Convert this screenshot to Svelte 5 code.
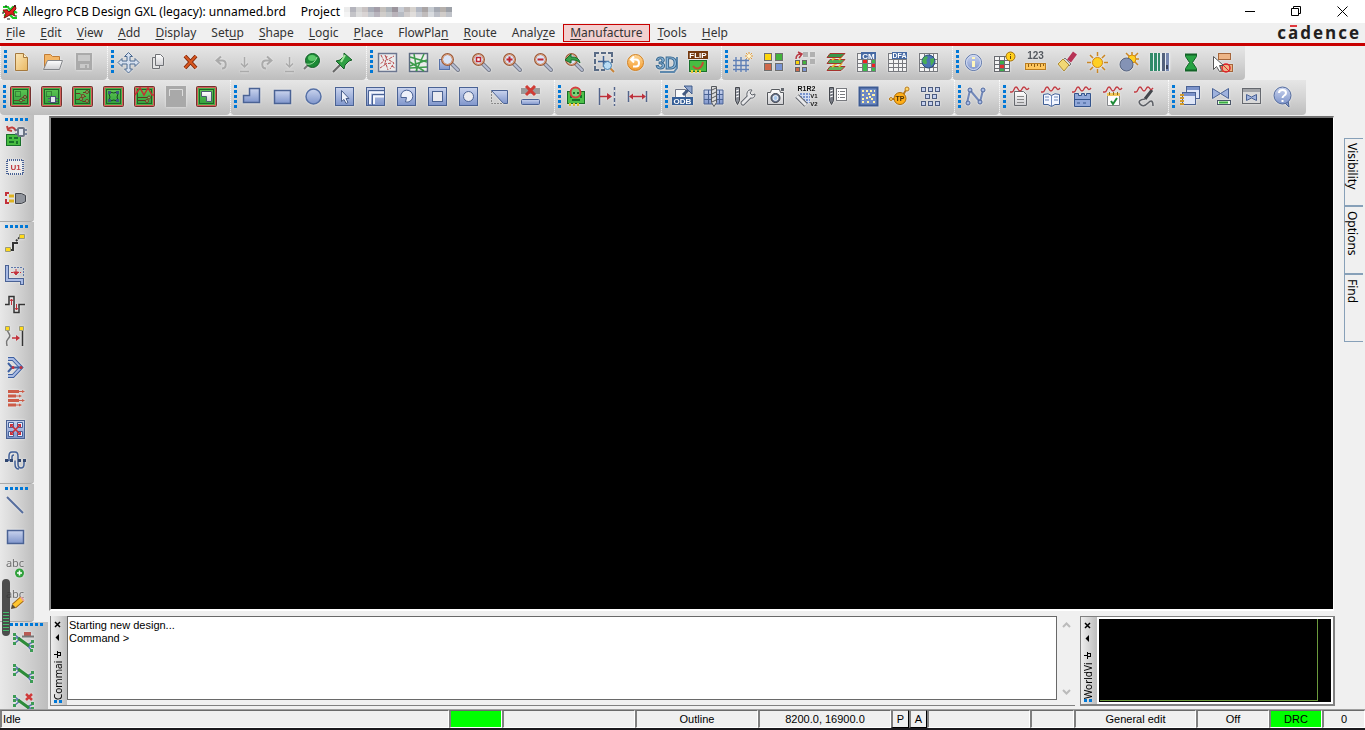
<script lang="ts">
	type Tool = { icon: string; label: string; small?: boolean };

	const menus = [
		['', 'F', 'ile'],
		['', 'E', 'dit'],
		['', 'V', 'iew'],
		['', 'A', 'dd'],
		['', 'D', 'isplay'],
		['Set', 'u', 'p'],
		['', 'S', 'hape'],
		['', 'L', 'ogic'],
		['', 'P', 'lace'],
		['FlowPla', 'n', ''],
		['', 'R', 'oute'],
		['Analy', 'z', 'e'],
		['', 'M', 'anufacture'],
		['', 'T', 'ools'],
		['', 'H', 'elp']
	];

	let activeMenu = $state('Manufacture');

	// shared pieces of the icons, all on a 23 x 23 grid
	const board = (inner: string) =>
		`<rect x="1.5" y="1.5" width="20" height="20" rx="1" fill="#4bb04a" stroke="#74302f"/>
		<rect x="2.5" y="2.5" width="18" height="18" fill="none" stroke="#d4605a"/>
		<rect x="4.5" y="4.5" width="14" height="14" fill="url(#leaf)" stroke="#1d6426"/>${inner}`;
	const panel = (inner: string) =>
		`<rect x="2.5" y="2.5" width="18" height="18" fill="url(#steel)" stroke="#4a6294"/>${inner}`;
	const lens = (inner: string) =>
		`<path d="M14 13l6 6" stroke="#7a7f8c" stroke-width="4" stroke-linecap="round"/>
		<path d="M14 13l6 6" stroke="#b6bdd2" stroke-width="2" stroke-linecap="round"/>
		<circle cx="9.5" cy="8.5" r="5.5" fill="#dbe4f6" stroke="#9a5a3c" stroke-width="2"/>
		<circle cx="9.5" cy="8.5" r="5" fill="none" stroke="#e0a37c"/>${inner}`;
	const wave = (inner: string) =>
		`${inner}<path d="M1 7h2c2 0 2-5 4-5s2 4 4 4 2-4 4-4 2 5 5 1" fill="none" stroke="#c23b42" stroke-width="1.4"/>`;
	const sheet = (head: string) =>
		`<rect x="2.5" y="2.5" width="18" height="18" fill="#f4f4f4" stroke="#77797e"/>
		<path d="M3 8.500h17M3 12.500h17M3 16.500h17M7.500 3v17M12.500 3v17M16.500 3v17" stroke="#77797e"/>${head}`;
	const label = (x: number, y: number, size: number, fill: string, text: string) =>
		`<text x="${x}" y="${y}" font-size="${size}" font-weight="700" font-family="Liberation Sans, sans-serif" text-anchor="middle" fill="${fill}">${text}</text>`;
	const blocks = (list: number[][], size: number, fill: string, stroke: string) =>
		list
			.map(([x, y]) => `<rect x="${x + 0.5}" y="${y + 0.5}" width="${size}" height="${size}" fill="${fill}" stroke="${stroke}"/>`)
			.join('');
	const ratsnest = (inner: string) =>
		`<path d="M2 4l6 5M2 8h6M3 13l5-4M8 9l7 6M15 15l6-3M15 15l6 2M15 15l5 6" stroke="#5b76b0" stroke-width="1.500" fill="none"/>
		<path d="M6 8l11 8" stroke="#2d8b3a" stroke-width="3"/>
		<path d="M1 3h3v3H1zM1 7h3v3H1zM1 12h3v3H1zM19 10h3v3h-3zM19 15h3v3h-3zM18 19h3v3h-3z" fill="#3c9b55"/>${inner}`;

	const icons: Record<string, string> = {
		new: `<path d="M5.500 2.500h8l4 4v13h-12z" fill="url(#paper)" stroke="#a5793d"/><path d="M13.500 2.500v4h4" fill="#fff3d2" stroke="#a5793d"/>`,
		open: `<path d="M3.500 17.500v-14h6l2 2h7v4" fill="#f3b667" stroke="#c27c34"/><path d="M2.500 18.500l4-9h15l-3 9z" fill="url(#page)" stroke="#84868a"/>`,
		save: `<path d="M4 2h16v17H4z" fill="#aaa"/><path d="M6 4h12v6H6zM8 13h9v4H8z" fill="#c9c9c9"/><path d="M13 14h2v3h-2z" fill="#aaa"/>`,
		move: `<path d="M11.500 1.500l4 4h-2.500v4.500h5v-2.500l4 4-4 4v-2.500h-5v5h2.500l-4 4-4-4h2.500v-5h-5v2.500l-4-4 4-4v2.500h5v-4.500h-2.500z" fill="#d5dfee" stroke="#4b688e"/>`,
		copy: `<path d="M4.500 6.500h7v11h-7z" fill="#e5e5e5" stroke="#6f7175"/><path d="M7.500 3.500h5l3 3v8h-8z" fill="url(#page)" stroke="#6f7175"/>`,
		delete: `<path d="M6 5l11 12M17 5L6 17" stroke="#7d2c12" stroke-width="4"/><path d="M6 5l11 12M17 5L6 17" stroke="#d9571f" stroke-width="2"/>`,
		undo: `<path d="M7 9.500h5c5 0 5 8 0 8M11 5.500l-4.500 4 4.500 4" fill="none" stroke="#aaa" stroke-width="2"/>`,
		redo: `<path d="M16 9.500h-5c-5 0-5 8 0 8M12 5.500l4.500 4-4.500 4" fill="none" stroke="#aaa" stroke-width="2"/>`,
		more: `<path d="M11.500 6v10M8 12.500l3.500 3.500 3.500-3.500M7 20.500h9" fill="none" stroke="#aaa" stroke-width="1.500"/>`,
		leafpin: `<path d="M4 18l4-4" stroke="#777" stroke-width="2"/><ellipse cx="12.500" cy="9.500" rx="7" ry="7" fill="#1c8a36" stroke="#135c26"/><ellipse cx="12" cy="7" rx="4" ry="3" fill="#5cc96a"/><path d="M6 13c5 1 9-1 11-7" fill="none" stroke="#a5dba4"/>`,
		pushpin: `<path d="M2 21l8-8" stroke="#666" stroke-width="2"/><path d="M13 2l8 7-3 1-4 4-1 4-8-8 4-1 4-4z" fill="#2fa043" stroke="#135c26"/><path d="M14 4l-4 7" stroke="#a5e6a0" stroke-width="2"/>`,
		nets: `<rect x="2.500" y="2.500" width="18" height="18" fill="#ececec" stroke="#6b7690" stroke-width="1.500"/><path d="M5 4l3 6-4 3M9 4l2 5 7-4M4 17l6-4 2 6M13 9l5 3-4 6M8 13l8-1M11 5l-2 7M16 15l3 2" fill="none" stroke="#b9484b" stroke-dasharray="3 1"/>`,
		netsgreen: `<rect x="2.500" y="2.500" width="18" height="18" fill="#ececec" stroke="#5b6a80" stroke-width="1.500"/><path d="M3 6l17 5M3 15l17-6M7 3l3 17M17 3l-8 17M3 11l14 9M3 17l17-1" fill="none" stroke="#3d9b4b" stroke-width="1.500"/>`,
		zoomarea: `<rect x="1.500" y="8.500" width="10" height="10" fill="url(#steel)" stroke="#5570a8"/>` + lens(''),
		zoomrect: lens(`<rect x="7.500" y="6.500" width="4" height="4" fill="#fff" stroke="#bf2430" stroke-width="1.500"/>`),
		zoomin: lens(`<path d="M6.500 8.500h6M9.500 5.500v6" stroke="#bf2430" stroke-width="2"/>`),
		zoomout: lens(`<path d="M6.500 8.500h6" stroke="#bf2430" stroke-width="2"/>`),
		zoomprev: lens(`<path d="M3 9l6-6v3c5 0 8 1 9 6-3-3-5-3-9-3v3z" fill="#38a34b" stroke="#176a2a"/>`),
		zoomsel: `<path d="M2 6V2h4M8 2h5M15 2h4v4M2 8v5M2 15v4h4M19 8v4M8 19h4" fill="none" stroke="#596b85" stroke-width="2"/><path d="M10.500 5v11M5 10.500h11" stroke="#3d5f90" stroke-width="1.500"/><path d="M17 17l4 4" stroke="#c98438" stroke-width="2"/><circle cx="14.500" cy="14.500" r="4" fill="#b9dcf5" stroke="#477fae"/>`,
		refresh: `<circle cx="11.500" cy="11.500" r="8" fill="url(#amber)" stroke="#cf8126"/><path d="M7 8.500h5c4 0 4 7 0 7H9M10 5.500l-3 3 3 3" fill="none" stroke="#fff" stroke-width="2"/>`,
		threed: `<path d="M5 21h14l3-4V6" fill="none" stroke="#5d88ad" stroke-width="2"/><text x="11.500" y="17.500" text-anchor="middle" font-family="Liberation Sans, sans-serif" font-weight="700" font-size="17" fill="#8db8dc" stroke="#3a698f">3D</text>`,
		flip: `<rect x="3.500" y="9.500" width="17" height="11" fill="#48bd42" stroke="#18702a"/><path d="M5 19h2v3H5zM9 19h2v3H9zM13 19h2v3h-2z" fill="#e8c93c"/><path d="M7 15c4 5 9 2 10-4" fill="none" stroke="#c84a33" stroke-width="2"/><rect x="2" y="0" width="20" height="8" fill="#74380e"/>` + label(12, 7, 8, '#fff', 'FLIP'),
		grid: `<path d="M5 6v15M10 6v15M15 8v13M2 9.500h16M2 14.500h16M2 18.500h16" stroke="#5f7fb5" stroke-width="1.400"/><path d="M18 1v8M14 5h8M15 2l6 6M21 2l-6 6" stroke="#e19a35"/><circle cx="18" cy="5" r="2" fill="#fff5cf"/>`,
		colors: `<rect x="2.500" y="2.500" width="7" height="7" fill="#fcd50b" stroke="#6e6e6e"/><rect x="13.500" y="2.500" width="7" height="7" fill="#43b33c" stroke="#6e6e6e"/><rect x="2.500" y="12.500" width="7" height="7" fill="#cf684a" stroke="#6e6e6e"/><rect x="13.500" y="12.500" width="7" height="7" fill="#7994d3" stroke="#6e6e6e"/>`,
		shadow: `<path d="M10 1h5v5h-5zM17 1h5v5h-5zM17 8h5v5h-5z" fill="#b1b1b1"/><path d="M3 8c0-4 2-5 5-5M5 1l4 2-3 4" fill="none" stroke="#b73842" stroke-width="1.500"/><rect x="2.500" y="9.500" width="4" height="4" fill="#fcd50b" stroke="#666"/><rect x="9.500" y="9.500" width="4" height="4" fill="#43b33c" stroke="#666"/><rect x="2.500" y="16.500" width="4" height="4" fill="#cf684a" stroke="#666"/><rect x="9.500" y="16.500" width="4" height="4" fill="#7994d3" stroke="#666"/>`,
		layers: `<path d="M6 15.500h15l-4 4H3z" fill="#5fb45a" stroke="#a5332d"/><path d="M8 16l5-4M15 16l3-4" stroke="#e8b93c" stroke-width="2"/><path d="M6 8.500h15l-4 4H3z" fill="#4cae58" stroke="#a5332d"/><path d="M8 9l5-4M15 9l3-4" stroke="#e8b93c" stroke-width="2"/><path d="M6 2.500h15l-4 4H3z" fill="#38964a" stroke="#a5332d"/>`,
		cm: sheet(`<path d="M8 9h4v3H8zM17 13h3v3h-3z" fill="#e22"/><path d="M8 13h4v7H8zM17 9h3v3h-3zM17 17h3v3h-3z" fill="#3bbb4b"/><path d="M6 1h15v7H6z" fill="#4569a3"/>` + label(13.5, 7.5, 8, '#fff', 'CM')),
		dfa: sheet(`<path d="M6 1h15v7H6z" fill="#4569a3"/>` + label(13.5, 7, 7, '#fff', 'DFA')),
		globe: sheet(`<circle cx="11.500" cy="10.500" r="6.500" fill="#4b73b4" stroke="#284c7c"/><path d="M7 6c3-2 5 0 3 2s2 4-1 5-3-2-4-3zM13 8l4-1v4l-3 4z" fill="#48ae55"/>`),
		info: `<circle cx="11.500" cy="11.500" r="8" fill="url(#steel)" stroke="#5b74a8"/><circle cx="11.500" cy="11.500" r="7" fill="none" stroke="#d6def3"/><path d="M10 10h3v6h-3zM10 6h3v2h-3z" fill="#fff6bd"/>`,
		report: `<rect x="1.500" y="5.500" width="15" height="15" fill="#f4f4f4" stroke="#696b70"/><path d="M2 9.500h14M2 13.500h14M2 17.500h14M6.500 6v14M11.500 6v14" stroke="#696b70"/><path d="M7 10h4v3H7zM7 18h4v2H7z" fill="#3cae4c"/><path d="M7 14h4v3H7z" fill="#e23030"/><circle cx="17.500" cy="5.500" r="4.500" fill="#ffcf1b" stroke="#a06d0c"/><path d="M17.500 5v3M17.500 3v1" stroke="#6b4a0a"/>`,
		ruler: label(11.5, 8, 10, '#55595f', '123') + `<rect x="1.500" y="12.500" width="20" height="6" fill="#ffc75e" stroke="#ba7d20"/><path d="M4.500 13v3M7.500 13v2M10.500 13v3M13.500 13v2M16.500 13v3M19.500 13v2" stroke="#8f5e15"/>`,
		brush: `<path d="M20 2l-6 8" stroke="#b73356" stroke-width="5"/><path d="M10 7l6 6-2 2-6-6z" fill="#d7d7d7" stroke="#777"/><path d="M8 8l6 6-5 6-6-7z" fill="#f1d774" stroke="#ae8a31"/>`,
		sun: `<path d="M11.500 1v21M1 11.500h21M4 4l15 15M19 4L4 19" stroke="#c98626" stroke-width="1.500"/><circle cx="11.500" cy="11.500" r="6.500" fill="#dedede"/><circle cx="11.500" cy="11.500" r="5" fill="#ffd022" stroke="#d48a12"/>`,
		dim: `<path d="M15 1v16M7 8h15M9 2l12 12M21 2l-6 6" stroke="#c98626" stroke-width="1.500"/><circle cx="15" cy="8" r="4" fill="#ffd022" stroke="#d48a12"/><circle cx="9.500" cy="13.500" r="6.500" fill="#8493b5" stroke="#55637f"/>`,
		stripes: `<path d="M2 2h20v18H2z" fill="#e6edf2"/><path d="M2 2h3v18H2zM6 2h3v18H6zM10 2h2v18h-2z" fill="#318b69"/><path d="M14 2h3v18h-3z" fill="#52617d"/><path d="M18 2h3v18h-3z" fill="#7687b0"/><path d="M18 14h2v4h-2z" fill="#37425a"/>`,
		hourglass: `<path d="M6.500 3.500h11v2l-4 6 4 6v2h-11v-2l4-6-4-6z" fill="#27a243" stroke="#126327"/><path d="M6 3.500h12M6 19.500h12" stroke="#126327" stroke-width="2"/>`,
		nopick: `<rect x="8.500" y="2.500" width="12" height="6" fill="#edb486" stroke="#a5653a"/><rect x="10.500" y="13.500" width="12" height="7" fill="#edb486" stroke="#a5653a"/><circle cx="16" cy="17" r="4" fill="none" stroke="#e0202a" stroke-width="1.500"/><path d="M13 14l6 6" stroke="#e0202a"/><path d="M3.500 5.500v13l3-3 3 5 2-1-2-5h4z" fill="#fff" stroke="#555"/>`,

		place1: board(`<rect x="6.500" y="6.500" width="5" height="5" fill="none" stroke="#1c5224" stroke-dasharray="1 1"/><path d="M5 15.500h5l3-3h5M13 15.500h3" fill="none" stroke="#6a4a28"/><circle cx="16" cy="12" r="1.500" fill="#6fc065" stroke="#6a3528"/><circle cx="12" cy="15.500" r="1.500" fill="#6fc065" stroke="#6a3528"/>`),
		place2: board(`<rect x="6.500" y="6.500" width="5" height="5" fill="none" stroke="#1c5224" stroke-dasharray="1 1"/><rect x="10.500" y="11.500" width="5" height="6" fill="#e7e7f0" stroke="#4c5478"/><path d="M8 13.500h2M8 16.500h2M16 13.500h2M16 16.500h2" stroke="#4c5478"/>`),
		place3: board(`<path d="M5 8.500h4l3 3h3M5 14.500h4l3 2h3M12 7.500h3" fill="none" stroke="#6a3a24"/><circle cx="12" cy="11" r="1.500" fill="#6fc065" stroke="#7c3b26"/><circle cx="16" cy="7" r="1.500" fill="#6fc065" stroke="#7c3b26"/><circle cx="10" cy="14" r="1.500" fill="#6fc065" stroke="#7c3b26"/><circle cx="16" cy="16" r="1.500" fill="#6fc065" stroke="#7c3b26"/>`),
		place4: board(`<path d="M8 7q4 2 7 0M8 16q4-2 7 0M7 9q2 3 0 6M16 9q-2 3 0 6" fill="none" stroke="#17491f"/><path d="M6 6h3v3H6zM14 6h3v3h-3zM6 14h3v3H6zM14 14h3v3h-3z" fill="#3f5a7c"/>`),
		place5: board(`<path d="M2 10l5-7 4 7 4-7 4 7h2" fill="none" stroke="#c62e33" stroke-width="1.500"/><path d="M5 12.500h10M5 15.500h8" stroke="#5f3a22"/><circle cx="16" cy="12.500" r="1.500" fill="#6fc065" stroke="#7c3b26"/><circle cx="14" cy="16" r="1.500" fill="#6fc065" stroke="#7c3b26"/>`),
		placeoff: `<path d="M2 1h20v21H2z" fill="#a9a9a9"/><path d="M5.500 11V4.500h13V11" fill="none" stroke="#ddd"/>`,
		place7: board(`<path d="M6.500 6.500h10v10h-5v-5h-5z" fill="url(#page)" stroke="#4b5c70"/>`),

		polygon: `<path d="M3.500 10.500h6v-7h10v14h-16z" fill="url(#steel)" stroke="#4a6294" stroke-width="1.500"/>`,
		rect: `<rect x="3.500" y="5.500" width="16" height="13" fill="url(#steel)" stroke="#4a6294" stroke-width="1.500"/>`,
		circle: `<circle cx="11.500" cy="11.500" r="7.500" fill="url(#steel)" stroke="#5670a5" stroke-width="1.500"/>`,
		pick: panel(`<path d="M8.500 5.500v11l2.500-2 2 4 2-1-2-4h3z" fill="#eef1fa" stroke="#4a5f8c"/>`),
		edge: panel(`<path d="M6 19V7.500h14M10 19v-7.500h10" fill="none" stroke="#f4f6fc" stroke-width="2"/><path d="M4.500 20V5.500h16M8.500 20V9.500h12" fill="none" stroke="#4a6294"/>`),
		pie: panel(`<path d="M11.500 12.500H6A6 6 0 1 1 10.500 17z" fill="#eef1fa" stroke="#4a6294"/>`),
		voidrect: panel(`<rect x="6.500" y="6.500" width="10" height="10" fill="#eaeaef" stroke="#4a6294"/>`),
		voidcircle: panel(`<circle cx="11.500" cy="11.500" r="5" fill="#eaeaef" stroke="#4a6294"/>`),
		cut: `<path d="M3.500 5.500h16v13h-4z" fill="url(#steel)" stroke="#4a6294"/><path d="M3.500 6v12.500h12" fill="none" stroke="#888" stroke-dasharray="2 1"/>`,
		dropshape: `<path d="M2 3h19v6H2z" fill="#9b9b9b"/><path d="M7 1l9 9M16 1l-9 9" stroke="#d03c35" stroke-width="3"/><rect x="2.500" y="14.500" width="18" height="5" rx="1" fill="url(#steel)" stroke="#4a6294"/>`,

		package: `<rect x="3.500" y="6.500" width="17" height="12" fill="#4cc149" stroke="#176d25"/><path d="M5 18h2v3H5zM9 18h2v3H9zM13 18h2v3h-2z" fill="#dcc034"/><path d="M6 10h2v3H6zM16 10h2v3h-2zM8 14h8v2H8z" fill="#17732a"/><circle cx="11.500" cy="7.500" r="5" fill="#7dd077" stroke="#d53f3f" stroke-width="2"/><path d="M9 7h2v2H9zM13 7h2v2h-2z" fill="#17732a"/>`,
		dimedge: `<path d="M4.500 3v17M19.500 2v19" stroke="#53648a" stroke-width="1.500"/><path d="M19.500 5v2M19.500 11v2M19.500 17v2" stroke="#e0e0e0" stroke-width="2"/><path d="M5 11.500h9" stroke="#bd303b" stroke-width="1.500"/><path d="M12 8l5 3.500-5 3.500z" fill="#bd303b"/>`,
		dimension: `<path d="M2.500 6v11M20.500 6v11" stroke="#53648a" stroke-width="1.500"/><path d="M5 11.500h13" stroke="#bd303b" stroke-width="1.500"/><path d="M3 11.500l4-3v6zM20 11.500l-4-3v6z" fill="#bd303b"/>`,

		odb: `<path d="M4.500 4.500h10v14h-10z" fill="#fafafa" stroke="#727786"/><path d="M12 10l6-6" stroke="#445b82" stroke-width="3"/><path d="M13 1h8v8z" fill="#8ea4cc" stroke="#3f5a89"/><path d="M1 12h21v8H1z" fill="#365f98"/>` + label(11.5, 19, 8, '#fff', 'ODB'),
		drill: `<path d="M2 5h19v14H2z" fill="url(#steel)" stroke="#4a6294"/><path d="M2 9.500h19M2 14.500h19M6.500 5v14M17.500 5v14" stroke="#4a6294"/><path d="M9.500 1.500h5v16l-2.500 4-2.500-4z" fill="#ddd" stroke="#55585d"/><path d="M10 5l4-2M10 9l4-2M10 13l4-2M10 17l4-2" stroke="#55585d"/>`,
		drillset: `<path d="M2.500 2.500h4v13l-2 4-2-4z" fill="#8b8f98" stroke="#44474d"/><path d="M3 6l3-1M3 9l3-1M3 12l3-1" stroke="#fff"/><path d="M10 18l6-6" stroke="#60646b" stroke-width="5" stroke-linecap="round"/><path d="M14 8q1-4 5-3l-2 3 2 2 3-1q0 5-5 4-4-1-3-5z" fill="#e8e8ea" stroke="#60646b"/><path d="M10 18l6-6" stroke="#e8e8ea" stroke-width="3" stroke-linecap="round"/>`,
		camera: `<path d="M3.500 7.500h3l1-3h8l1 3h3v12h-16z" fill="url(#page)" stroke="#55585d"/><circle cx="11.500" cy="13" r="4.500" fill="#6c7b98" stroke="#3b3e44"/><circle cx="11.500" cy="13" r="2.500" fill="#a8c7ea" stroke="#f5f5f5"/><path d="M17 3h3v3h-3z" fill="#62666d"/>`,
		rename: `<path d="M5 8h10v10H5z" fill="#7994cc"/><path d="M5 10.500h10M5 13.500h10M5 16.500h10M7.500 8v10M10.500 8v10M13.500 8v10" stroke="#d5def2"/><path d="M2 11l4 4 5 5" fill="none" stroke="#60646b" stroke-width="5"/><path d="M2 11l4 4 5 5" stroke="#e8e8ea" stroke-width="3" fill="none"/>` + label(11.5, 6, 7, '#111', 'R1R2') + label(19, 13, 6, '#111', 'V1') + label(19, 21, 6, '#111', 'V2'),
		drilllist: `<path d="M3.500 2.500h4v13l-2 4-2-4z" fill="#777b84" stroke="#44474d"/><path d="M4 6l3-1M4 9l3-1M4 12l3-1" stroke="#fff"/><rect x="10.500" y="3.500" width="10" height="12" fill="#fff" stroke="#77797e"/><path d="M12 6.500h1M14 6.500h5M12 9.500h1M14 9.500h5M12 12.500h1M14 12.500h5" stroke="#77797e"/>`,
		matrix: `<rect x="2.500" y="2.500" width="18" height="18" fill="#6e8ac4" stroke="#3d5b93" stroke-width="2"/><path d="M5 6h2M9 6h2M13 6h2M17 6h1M5 10h2M11 9h2M15 10h3M5 14h2M9 13h2M14 14h2M5 17h2M10 17h2M16 17h2M12 12h2" stroke="#fff2a8" stroke-width="2"/>`,
		testpoint: `<path d="M1 14h9M15 10l3-5" stroke="#b8791c" stroke-width="2"/><circle cx="19" cy="4" r="2" fill="#ffd86b" stroke="#b8791c"/><circle cx="3" cy="14" r="1.500" fill="#ffd86b" stroke="#b8791c"/><circle cx="12" cy="13.500" r="6" fill="#ffae17" stroke="#a76a0c"/>` + label(12, 16, 7, '#4d3006', 'TP'),
		array: blocks([[2, 2], [9, 2], [16, 2], [6, 9], [13, 9], [2, 16], [9, 16], [16, 16]], 4, '#c6d1ee', '#4c5c80'),

		polyline: `<path d="M3 18l3-13 10 12 3-12" fill="none" stroke="#7288b8" stroke-width="2"/><circle cx="4" cy="18" r="2" fill="#a9bce6" stroke="#4d669b"/><circle cx="6" cy="5" r="2" fill="#a9bce6" stroke="#4d669b"/><circle cx="16" cy="17" r="2" fill="#a9bce6" stroke="#4d669b"/><circle cx="19" cy="5" r="2" fill="#a9bce6" stroke="#4d669b"/>`,

		wavedoc: wave(`<path d="M5.500 6.500h9l3 3v11h-12z" fill="url(#page)" stroke="#66696e"/><path d="M8 11.500h7M8 14.500h7M8 17.500h7" stroke="#888"/>`),
		wavebook: wave(`<path d="M3.500 9.500q5-2 8 1 3-3 8-1v10q-5-1-8 2-3-3-8-2z" fill="#f4f7ff" stroke="#3f5f96"/><path d="M11.500 11v10M5 12h4M5 15h4M14 12h4M14 15h4" stroke="#6a86ba"/>`),
		wavechip: wave(`<path d="M3.500 8.500h4v2h3v-2h3v2h2v-2h4v13h-16z" fill="#91a8d9" stroke="#34548c"/><path d="M3 14.500h17M6 18h3M12 18h3" stroke="#34548c"/>`),
		wavenote: wave(`<path d="M5.500 9.500h12v11h-12z" fill="#fdfdfd" stroke="#85878b"/><path d="M5 8h13v3H5z" fill="#f1c65c"/><path d="M7.500 7v3M11.500 7v3M15.500 7v3" stroke="#8d6b1d"/><path d="M9 16l2 3 4-6" fill="none" stroke="#1c8a36" stroke-width="2"/>`),
		waveprobe: wave(`<path d="M19 5l-7 9" stroke="#43474d" stroke-width="3"/><path d="M12 14q-8 1-5 5t8-1 5 3" fill="none" stroke="#5d6066" stroke-width="1.500"/>`),

		cascade: `<rect x="8.500" y="1.500" width="13" height="12" fill="#dfe6f7" stroke="#4a6294"/><path d="M9 2h12v3H9z" fill="#7c93ca"/><rect x="4.500" y="7.500" width="13" height="12" fill="#dfe6f7" stroke="#4a6294"/><path d="M5 8h12v3H5z" fill="#7c93ca"/><path d="M2 10h4M2 13h4M2 16h4M2 19h4" stroke="#d29a2a" stroke-width="2"/>`,
		bowtie: `<path d="M3.500 3.500l8 5 8-5v10l-8-5-8 5z" fill="#9fb2dd" stroke="#4a6294"/><rect x="8.500" y="15.500" width="13" height="4" fill="#e9ffe5" stroke="#4a5568"/><path d="M10 17.500h9" stroke="#37ad3f" stroke-width="2"/>`,
		window: `<rect x="2.500" y="3.500" width="18" height="15" fill="#d9d9d9" stroke="#65686e"/><path d="M3 4h17v3H3z" fill="#a2a4a8"/><path d="M6.500 9.500l5 2.500 5-2.500v6l-5-2.500-5 2.500z" fill="#9fb2dd" stroke="#4a6294"/>`,
		help: `<path d="M13 17l5 5-1-7z" fill="#8398cc" stroke="#4a6294"/><circle cx="11.500" cy="10.500" r="8.500" fill="url(#steel)" stroke="#51699b"/><path d="M8 8c0-4 7-4 7 0 0 3-3.500 2-3.500 5" fill="none" stroke="#fff" stroke-width="2"/><path d="M10.500 15h2v2h-2z" fill="#fff"/>`,

		quickplace: `<rect x="2.500" y="9.500" width="14" height="11" fill="#48bd42" stroke="#18702a"/><path d="M5 12h3v2H5zM10 12h4v2h-4zM5 16h5v2H5zM12 16h2v3h-2z" fill="#17732a"/><path d="M4 4q5-4 8 2M3 1l1 4 4 1" fill="none" stroke="#c13f3b" stroke-width="2"/><rect x="14" y="3" width="6" height="8" rx="1" fill="#dfe4ee" stroke="#6b7484" stroke-width="2"/><path d="M11 5h2M11 9h2M21 5h2M21 9h2" stroke="#596b8c" stroke-width="1.500"/>`,
		component: `<rect x="3" y="4" width="16" height="14" fill="#ececec" stroke="#4a6294" stroke-width="2" stroke-dasharray="1 1"/>` + label(11.5, 14, 8, '#c0383d', 'U1'),
		swap: `<path d="M5 6H2v3M2 12v4h3" fill="none" stroke="#c2303a" stroke-width="2"/><path d="M5 9h5M5 14h5" stroke="#deb321" stroke-width="3"/><path d="M11.500 6.500h6l4 2v6l-4 2h-6z" fill="#90949c" stroke="#42454b"/>`,
		route: `<path d="M5 18h4v-7h5" fill="none" stroke="#333" stroke-width="2"/><path d="M12 9l5-5" stroke="#333" stroke-width="2" stroke-dasharray="2 1"/><path d="M1.500 15.500h5v4h-5zM15.500 2.500h5v4h-5z" fill="#ffd91a" stroke="#9a9a7a"/>`,
		slide: `<path d="M3 2v15h15v5" fill="none" stroke="#4a6294" stroke-width="4"/><path d="M3 3v14h15v4" fill="none" stroke="#a9bbe4" stroke-width="2"/><path d="M7 4.500h12M19.500 5v9" stroke="#5d77ab" stroke-dasharray="2 1"/><path d="M7 9.500h10" stroke="#c2303a" stroke-dasharray="2 1"/><path d="M12 6v5M9.500 9l2.500 3 2.500-3z" stroke="#c2303a" fill="#c2303a"/>`,
		tune: `<path d="M1 10.500h4v-8h5v16h5v-8h6" fill="none" stroke="#333" stroke-width="1.500"/><path d="M7.500 11V5M6 7l1.500-2L9 7M12.500 10v6M11 14l1.500 2 1.500-2" fill="none" stroke="#c2303a"/>`,
		vertex: `<path d="M3 5c3 5 4 6 1 9s-1 4-1 7" fill="none" stroke="#777" stroke-width="1.500"/><path d="M18.500 6v15" stroke="#333" stroke-width="1.500"/><path d="M8 13h6" stroke="#c2303a" stroke-width="1.500"/><path d="M12 10l4 3-4 3z" fill="#c2303a"/><path d="M1.500 1.500h4v4h-4zM15.500 1.500h4v4h-4z" fill="#ffd91a" stroke="#9a9a7a"/>`,
		fan: `<path d="M4 3h5l8 8.500-8 8.500H4" fill="none" stroke="#3c5fa0" stroke-width="4"/><path d="M4 3h5l8 8.500-8 8.500H4" fill="none" stroke="#a9bbe4" stroke-width="2"/><path d="M4 7l4 4.500L4 16M8 11.500h10" fill="none" stroke="#3c5fa0" stroke-width="2"/><circle cx="9" cy="11.500" r="1.500" fill="#c2303a"/><circle cx="17" cy="11.500" r="1.500" fill="#c2303a"/>`,
		bus: `<path d="M4 4.500h11M4 9h8M4 13.500h11M4 18h8" stroke="#cc5b47" stroke-width="3"/><path d="M15 4.500h5M12 9h4M15 13.500h5M12 18h4" stroke="#cc5b47"/><path d="M18 3l3 1.500L18 6zM15 7.500L18 9l-3 1.500zM18 12l3 1.500-3 1.500zM15 16.500l3 1.500-3 1.500z" fill="#cc5b47"/>`,
		spread: panel(`<path d="M4.500 4.500h5v5h-5zM13.500 4.500h5v5h-5zM4.500 13.500h5v5h-5zM13.500 13.500h5v5h-5z" fill="#e9eefb" stroke="#43609a"/><path d="M7 7l9 9M16 7l-9 9" stroke="#cb2f38" stroke-width="1.500"/><path d="M6 6h4l-4 4zM17 6h-4l4 4zM6 17h4l-4-4zM17 17h-4l4-4z" fill="#cb2f38"/>`),
		serpentine: `<path d="M2 11.500h3V7q0-4 3-4h3q3 0 3 4v8q0 4 3 4t3-4v-3.500h2M8 11.500V8q0-2 2-2M11 11.500V15q0 5 4 5" fill="none" stroke="#405f96" stroke-width="1.500"/><path d="M1 10h3v3H1zM6 10h3v3H6zM14 10h3v3h-3zM19 10h3v3h-3z" fill="#31476f"/>`,
		line: `<path d="M3 3l16 16" stroke="#556d9d" stroke-width="2"/>`,
		text: `<text x="11" y="11" text-anchor="middle" font-family="Noto Sans, sans-serif" font-size="11" fill="#6f6f6f">abc</text><circle cx="15.500" cy="17" r="4.500" fill="#2fa03a"/><path d="M13 17h5M15.500 14.500v5" stroke="#fff" stroke-width="1.500"/>`,
		textedit: `<text x="11" y="11" text-anchor="middle" font-family="Noto Sans, sans-serif" font-size="11" fill="#6f6f6f">abc</text><path d="M10 19l8-7" stroke="#a06a18" stroke-width="6"/><path d="M10 19l8-7" stroke="#ffc52e" stroke-width="4"/><path d="M17 10l3 4" stroke="#e8a0a0" stroke-width="2"/><path d="M7 22l1-5 4 4z" fill="#5b4a30"/>`,
		rats: ratsnest(`<path d="M12 2h7v4h-7z" fill="#b85a54"/><path d="M10 6.500h12" stroke="#777" stroke-width="2"/>`),
		ratsshow: ratsnest(''),
		ratshide: ratsnest(`<path d="M14 2l6 6M20 2l-6 6" stroke="#cf3b3b" stroke-width="2.500"/>`)
	};

	const tools = (list: string): Tool[] =>
		list.split(' ').map((icon) => ({ icon, label: icon, small: icon === 'more' }));

	const topRow = [
		tools('new open save'),
		tools('move copy delete undo more redo more leafpin pushpin'),
		tools('nets netsgreen zoomarea zoomrect zoomin zoomout zoomprev zoomsel refresh threed flip'),
		tools('grid colors shadow layers cm dfa globe'),
		tools('info report ruler brush sun dim stripes hourglass nopick')
	];
	const secondRow = [
		tools('place1 place2 place3 place4 place5 placeoff place7'),
		tools('polygon rect circle pick edge pie voidrect voidcircle cut dropshape'),
		tools('package dimedge dimension'),
		tools('odb drill drillset camera rename drilllist matrix testpoint array'),
		tools('polyline'),
		tools('wavedoc wavebook wavechip wavenote waveprobe'),
		tools('cascade bowtie window help')
	];
	const sideBars = [
		tools('quickplace component swap'),
		tools('route slide tune vertex fan bus spread serpentine'),
		tools('line rect text textedit'),
		tools('rats ratsshow ratshide')
	];

	// pixelated project path, two rows of grey tiles
	const tiles = [
		'ececec', 'b4b4bc', 'd4d4d4', 'c9c3c3', 'a9adb8', 'a39da8', 'c4c0bc', 'adb3b9', '9b949c', 'c8ccd4', 'bdb8b8', 'd6d2ce', 'b2b7c2', 'aaa5a5', 'c6cbd1', 'a5a9b2', 'b5b0ac', '9da1a8',
		'f4f4f4', 'c4c4c8', 'dddddd', 'd9d4d4', 'c4c8ce', 'b8b4bd', 'd0cdca', 'c4c8cb', 'b9b3ba', 'b8bcc4', 'd0cccc', 'e0dddb', 'c9ccd3', 'c0bcbc', 'd8dbdf', 'bcbfc7', 'd0ccc9', 'c0c3c9'
	];

	let tab = $state('');
</script>

{#snippet toolButton(tool: Tool)}
	<button class="tool" class:small={tool.small} type="button" aria-label={tool.label}>
		<svg viewBox="0 0 23 23" width="23" height="23" fill="none">{@html icons[tool.icon]}</svg>
	</button>
{/snippet}

{#snippet dockStrip(name: string)}
	<div class="strip">
		<button type="button" aria-label="Close">
			<svg width="7" height="7" viewBox="0 0 7 7"><path d="M1 1l5 5M6 1L1 6" stroke="#000" stroke-width="1.5" /></svg>
		</button>
		<button type="button" aria-label="Collapse">
			<svg width="7" height="7" viewBox="0 0 7 7"><path d="M5 0v7L1.500 3.500z" /></svg>
		</button>
		<button type="button" aria-label="Pin">
			<svg width="7" height="7" viewBox="0 0 7 7"><path d="M0 3.500h3M3.500 0v7M3 1.500h4M3 4.500h4M6.500 1v4" fill="none" stroke="#000" /></svg>
		</button>
		<span class="strip-name">{name}</span>
		<span class="strip-dots"></span>
	</div>
{/snippet}

<svg class="defs" width="0" height="0" aria-hidden="true">
	<defs>
		<linearGradient id="steel" x2="0" y2="1"><stop offset="0" stop-color="#cad4ee" /><stop offset="1" stop-color="#7f95cb" /></linearGradient>
		<linearGradient id="leaf" x2="0" y2="1"><stop offset="0" stop-color="#5cc452" /><stop offset="1" stop-color="#35a33d" /></linearGradient>
		<linearGradient id="paper" x2="1" y2="1"><stop offset="0" stop-color="#fbe6b8" /><stop offset="1" stop-color="#e9b862" /></linearGradient>
		<linearGradient id="page" x2="0" y2="1"><stop offset="0" stop-color="#fff" /><stop offset="1" stop-color="#cfcfd2" /></linearGradient>
		<linearGradient id="amber" x2="0" y2="1"><stop offset="0" stop-color="#ffd796" /><stop offset="1" stop-color="#f39a2c" /></linearGradient>
	</defs>
</svg>

<div class="app">
	<header class="titlebar">
		<svg class="app-icon" width="16" height="16" viewBox="0 0 16 16">
			<path d="M1 3h5l2 3 3-3 3 1M1 8l4-2 3 4 5-1M3 13l4-3 4 4h4M11 6l4 3M2 11l3 1" fill="none" stroke="#19c823" stroke-width="2" />
			<path d="M1 6h4l2 2 4-4 2-3 1 4-3 3 2 4-4-2-3 2-4 2 2-4z" fill="#e0211f" stroke="#8a1010" />
			<path d="M3 2h2M12 2h2M13 12h2M5 15h3M0 9h2" stroke="#111" />
		</svg>
		<span class="title">Allegro PCB Design GXL (legacy): unnamed.brd</span>
		<span class="project">Project</span>
		<span class="tiles">
			{#each tiles as tile}
				<i style="background: #{tile}"></i>
			{/each}
		</span>
		<div class="window-buttons">
			<button type="button" aria-label="Minimize">
				<svg width="11" height="11" viewBox="0 0 11 11"><path d="M0 5.500h10" stroke="#000" /></svg>
			</button>
			<button type="button" aria-label="Restore">
				<svg width="11" height="11" viewBox="0 0 11 11"><path d="M.5 2.500h7v7h-7zM2.500 2V.5h7v7H8" fill="none" stroke="#000" /></svg>
			</button>
			<button type="button" aria-label="Close">
				<svg width="11" height="11" viewBox="0 0 11 11"><path d="M.5.5l10 10M10.500.5l-10 10" stroke="#000" /></svg>
			</button>
		</div>
	</header>

	<nav class="menubar">
		{#each menus as [before, key, after]}
			<button
				type="button"
				class="menu"
				class:active={activeMenu === before + key + after}
				onclick={() => (activeMenu = before + key + after)}>{before}<u>{key}</u>{after}</button
			>
		{/each}
		<span class="brand">c<span class="macron">a</span>dence</span>
	</nav>

	<div class="toolrow">
		{#each topRow as group}
			<div class="group" role="toolbar">
				<span class="handle"></span>
				{#each group as tool}{@render toolButton(tool)}{/each}
			</div>
		{/each}
	</div>
	<div class="toolrow second">
		{#each secondRow as group}
			<div class="group" role="toolbar">
				<span class="handle"></span>
				{#each group as tool}{@render toolButton(tool)}{/each}
			</div>
		{/each}
	</div>

	<div class="workspace">
		<aside class="side">
			{#each sideBars as group}
				<div class="side-group" role="toolbar">
					<span class="side-handle"></span>
					{#each group as tool}{@render toolButton(tool)}{/each}
				</div>
			{/each}
			<span class="meter"></span>
		</aside>

		<main class="center">
			<div class="canvas"></div>
			<div class="docks">
				<section class="command">
					{@render dockStrip('Commai')}
					<div class="console">
						<p>Starting new design...</p>
						<p>Command &gt;</p>
					</div>
					<div class="scroll">
						<svg width="9" height="6" viewBox="0 0 9 6"><path d="M1 5l3.500-3.500L8 5" fill="none" stroke="#bbb" stroke-width="2" /></svg>
						<svg width="9" height="6" viewBox="0 0 9 6"><path d="M1 1l3.500 3.500L8 1" fill="none" stroke="#bbb" stroke-width="2" /></svg>
					</div>
				</section>
				<section class="world">
					{@render dockStrip('WorldVi')}
					<div class="world-view"><div class="extent"></div></div>
				</section>
			</div>
		</main>

		<div class="tabs">
			{#each ['Visibility', 'Options', 'Find'] as name}
				<button type="button" class="tab" aria-pressed={tab === name} onclick={() => (tab = name)}>{name}</button>
			{/each}
		</div>
	</div>

	<footer class="status">
		<span class="idle">Idle</span>
		<span class="lit"></span>
		<span></span>
		<span>Outline</span>
		<span>8200.0, 16900.0</span>
		<button type="button">P</button>
		<button type="button">A</button>
		<span></span>
		<span></span>
		<span>General edit</span>
		<span>Off</span>
		<span class="lit">DRC</span>
		<span>0</span>
	</footer>
</div>

<style>
	:global(body) {
		margin: 0;
		background: #f0f0f0;
	}

	.defs {
		position: absolute;
	}

	.app {
		display: flex;
		flex-direction: column;
		height: 100vh;
		box-sizing: border-box;
		border-bottom: 2px solid #1c1a1e;
		overflow: hidden;
		background: #f0f0f0;
		color: #000;
		font-family: 'Noto Sans', sans-serif;
		font-size: 12px;
	}

	button {
		padding: 0;
		border: 0;
		background: none;
		color: inherit;
		font: inherit;
	}

	svg {
		display: block;
		flex: none;
	}

	.titlebar {
		display: flex;
		align-items: center;
		flex: none;
		height: 23px;
		padding-left: 2px;
		background: #fff;
	}

	.title {
		margin-left: 5px;
	}

	.project {
		margin: 0 4px 0 15px;
	}

	.tiles {
		display: grid;
		grid-template-columns: repeat(18, 6px);
		grid-auto-rows: 5px;
	}

	.window-buttons {
		display: flex;
		margin-left: auto;
	}

	.window-buttons button {
		display: flex;
		align-items: center;
		justify-content: center;
		width: 46px;
		height: 21px;
	}

	.menubar {
		display: flex;
		align-items: center;
		gap: 1px;
		flex: none;
		height: 20px;
		border-bottom: 3px solid #c80000;
		color: #333;
	}

	.menu {
		height: 18px;
		padding: 0 7px;
		line-height: 18px;
	}

	.menu:first-child {
		padding-left: 6px;
	}

	.menu u {
		text-underline-offset: 2px;
	}

	.menu.active {
		padding: 0 6px;
		border: 1px solid #c80000;
		line-height: 16px;
		background: #f2d0d0;
	}

	.brand {
		margin-left: auto;
		padding-right: 4px;
		font-family: 'Open Sans', sans-serif;
		font-size: 17px;
		font-weight: 700;
		line-height: 18px;
		letter-spacing: 2px;
		color: #231f20;
	}

	.macron {
		position: relative;
	}

	.macron::before {
		content: '';
		position: absolute;
		top: 4px;
		left: 2px;
		width: 7px;
		height: 2px;
		background: #e0393e;
	}

	.toolrow {
		display: flex;
		flex: none;
	}

	.group {
		display: flex;
		align-items: flex-start;
		height: 31px;
		padding: 1px 8px 2px 3px;
		border-left: 1px dotted #fff;
		border-radius: 0 0 4px 4px;
		background: linear-gradient(#e6e6e6, #d4d4d4 50%, #bdbdbd);
	}

	.second .group {
		padding-bottom: 3px;
	}

	.second .group:first-child {
		border-left: 0;
	}

	.handle {
		flex: none;
		width: 3px;
		height: 23px;
		margin: 3px -1px 0 0;
		background: repeating-linear-gradient(#0078d7 0 3px, transparent 3px 5px);
	}

	.second .handle {
		margin-top: 4px;
	}

	.tool {
		display: flex;
		align-items: center;
		justify-content: center;
		flex: none;
		width: 31px;
		height: 31px;
	}

	.tool svg {
		filter: drop-shadow(0 0 1px #eee);
	}

	.tool.small {
		width: 14px;
	}

	.workspace {
		display: flex;
		flex: 1;
		min-height: 0;
	}

	.side {
		position: relative;
		display: flex;
		flex-direction: column;
		align-items: flex-start;
		flex: none;
		width: 49px;
		overflow: hidden;
	}

	.side-group {
		display: flex;
		flex-direction: column;
		flex: none;
		width: 34px;
		padding: 3px 0 7px;
		border-bottom: 1px solid #aaa;
		border-radius: 0 0 4px 0;
		background: linear-gradient(90deg, #e8e8e8, #d4d4d4 50%, #bdbdbd);
	}

	.side-group:nth-child(4) {
		width: 40px;
		padding-top: 1px;
		padding-left: 8px;
		border-bottom: 0;
	}

	.side-handle {
		width: 23px;
		height: 3px;
		margin: 0 5px;
		background: repeating-linear-gradient(90deg, #0078d7 0 3px, transparent 3px 5px);
	}

	.side-group:nth-child(4) .side-handle {
		width: 33px;
		margin: 0 2px;
	}

	.meter {
		position: absolute;
		bottom: 73px;
		left: 2px;
		width: 8px;
		height: 57px;
		border-radius: 4px;
		background:
			repeating-linear-gradient(#46b96c 0 1px, #4a4a4a 1px 3px) 1px 33px / 6px 20px no-repeat,
			rgba(50, 50, 50, 0.85);
	}

	.center {
		display: flex;
		flex-direction: column;
		flex: 1;
		min-width: 0;
		padding-top: 1px;
	}

	.canvas {
		flex: 1;
		border: 2px solid;
		border-width: 2px 1px 2px 2px;
		border-color: #707070 #fff #fff #8a8a8a;
		margin-right: 1px;
		background: #000;
	}

	.docks {
		display: flex;
		gap: 5px;
		flex: none;
		height: 90px;
		padding: 5px 0 3px 1px;
	}

	.command,
	.world {
		display: flex;
		box-sizing: border-box;
		border: 1px solid #808080;
	}

	.command {
		flex: 1;
		min-width: 0;
		border-right: 0;
		border-top: 0;
	}

	.world {
		width: 255px;
		border-width: 1px 2px 2px 1px;
	}

	.strip {
		display: flex;
		flex-direction: column;
		align-items: center;
		flex: none;
		box-sizing: border-box;
		width: 16px;
		padding: 5px 3px 2px 0;
		background: linear-gradient(90deg, #eee, #bdbdbd);
	}

	.strip button {
		margin-bottom: 6px;
	}

	.strip button:nth-child(2) {
		margin-bottom: 10px;
	}

	.strip button:nth-child(3) {
		margin-bottom: 0;
	}

	.strip-name {
		flex: 1;
		min-height: 0;
		font-size: 10px;
		line-height: 14px;
		writing-mode: vertical-rl;
		transform: rotate(180deg);
	}

	.strip-dots {
		width: 8px;
		height: 3px;
		background: repeating-linear-gradient(90deg, #0078d7 0 3px, transparent 3px 5px);
	}

	.console {
		flex: 1;
		padding: 2px 1px;
		border: 1px solid #696969;
		margin-bottom: 5px;
		background: #fff;
		font-family: 'Liberation Sans', sans-serif;
		font-size: 11px;
		line-height: 13px;
	}

	.console p {
		margin: 0;
	}

	.scroll {
		display: flex;
		flex-direction: column;
		align-items: center;
		justify-content: space-between;
		width: 18px;
		padding: 6px 0 10px;
	}

	.world-view {
		flex: 1;
		padding: 0 13px 1px 1px;
		border: 2px solid #fff;
		background: #000;
	}

	.extent {
		box-sizing: border-box;
		height: 100%;
		border: 1px solid #6b9a3c;
		border-width: 0 1px 1px 0;
	}

	.tabs {
		flex: none;
		width: 21px;
		padding: 23px 0 0 9px;
	}

	.tab {
		display: block;
		width: 19px;
		height: 68px;
		padding: 4px 3px 0 0;
		border: 1px solid #87a0b8;
		border-width: 1px 0 1px 1px;
		text-align: left;
		line-height: 15px;
		writing-mode: vertical-rl;
	}

	.status {
		display: grid;
		grid-template-columns: minmax(0, 1fr) 53px 133px 123px 133px 18px 18px 103px 44px 122px 73px 53px 43px;
		flex: none;
		height: 19px;
		border-top: 1px solid #a0a0a0;
		box-sizing: border-box;
		font-family: 'Liberation Sans', sans-serif;
		font-size: 11px;
		line-height: 16px;
		text-align: center;
	}

	.status > * {
		border: 1px solid;
		border-width: 1px 1px 1px 2px;
		border-color: #6a6a6a #fff #fff #808080;
		overflow: hidden;
		white-space: nowrap;
	}

	.status .idle {
		padding-left: 1px;
		text-align: left;
	}

	.status .lit {
		background: #0f0;
	}

	.status button {
		border-color: #808080 #000 #000 #808080;
		line-height: 15px;
	}
</style>
